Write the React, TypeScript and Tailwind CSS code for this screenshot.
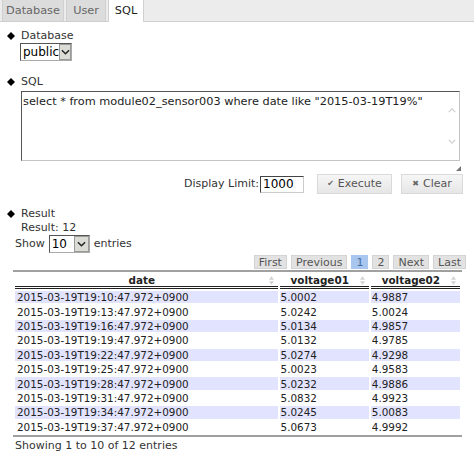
import React from 'react';

const rows = [
  ['2015-03-19T19:10:47.972+0900', '5.0002', '4.9887'],
  ['2015-03-19T19:13:47.972+0900', '5.0242', '5.0024'],
  ['2015-03-19T19:16:47.972+0900', '5.0134', '4.9857'],
  ['2015-03-19T19:19:47.972+0900', '5.0132', '4.9785'],
  ['2015-03-19T19:22:47.972+0900', '5.0274', '4.9298'],
  ['2015-03-19T19:25:47.972+0900', '5.0023', '4.9583'],
  ['2015-03-19T19:28:47.972+0900', '5.0232', '4.9886'],
  ['2015-03-19T19:31:47.972+0900', '5.0832', '4.9923'],
  ['2015-03-19T19:34:47.972+0900', '5.0245', '5.0083'],
  ['2015-03-19T19:37:47.972+0900', '5.0673', '4.9992'],
];

// 작은 V 모양 화살표 (셀렉트 박스용)
function Chevron({ up = false, className = '' }: { up?: boolean; className?: string }) {
  return (
    <svg viewBox="0 0 10 6" className={className} fill="none" stroke="currentColor" strokeWidth="1.6">
      {up ? <path d="M1 5 L5 1 L9 5" /> : <path d="M1 1 L5 5 L9 1" />}
    </svg>
  );
}

function SortIcon() {
  return (
    <svg viewBox="0 0 6 10" className="w-[5px] h-[9px] text-[#d0d0d0]" fill="currentColor">
      <path d="M3 0 L6 4 L0 4 Z" />
      <path d="M3 10 L6 6 L0 6 Z" />
    </svg>
  );
}

function FakeSelect({ value, width }: { value: string; width: string }) {
  return (
    <div
      className={`${width} h-[18px] flex items-stretch border border-t-[#555] border-l-[#555] border-r-[#aaa] border-b-[#aaa] bg-white`}
    >
      <span className="flex-1 pl-[2px] leading-[16px] text-[12px] text-black">{value}</span>
      <span className="w-[15px] flex items-center justify-center bg-[#dcdcd6] border border-[#9a9a9a] text-[#222]">
        <Chevron className="w-[9px] h-[6px]" />
      </span>
    </div>
  );
}

function Label({ text }: { text: string }) {
  return (
    <div className="flex items-center h-[14px] pl-[7px]">
      <span className="w-[14px] flex items-center">
        <svg viewBox="0 0 8 8" className="w-[8px] h-[8px] text-black" fill="currentColor">
          <path d="M4 0 L8 4 L4 8 L0 4 Z" />
        </svg>
      </span>
      <span className="text-[#333] text-[11px] leading-[14px]">{text}</span>
    </div>
  );
}

function PageBtn({ label, active = false }: { label: string; active?: boolean }) {
  return (
    <span
      className={
        active
          ? 'h-[14px] px-[4px] leading-[14px] bg-[#a8c6ee] border border-[#a8c6ee] text-[#4a6fa5]'
          : 'h-[14px] px-[4px] leading-[14px] bg-[#e2e2e2] border border-[#d4d4d4] text-[#555]'
      }
    >
      {label}
    </span>
  );
}

export default function App() {
  return (
    <div
      className="w-[474px] h-[452px] overflow-hidden bg-white text-[10.7px] text-[#333]"
      style={{ fontFamily: '"DejaVu Sans", Verdana, sans-serif' }}
    >
      {/* 탭 바 */}
      <div className="flex h-[22px] bg-[#ececec] border-b border-[#cfcfcf] pl-[2px] gap-[2px] items-end">
        <div className="w-[62px] h-[22px] leading-[22px] text-center bg-[#dcdcdc] border border-b-0 border-[#d0d0d0] text-[#666] text-[11.3px]">
          Database
        </div>
        <div className="w-[40px] h-[22px] leading-[22px] text-center bg-[#dcdcdc] border border-b-0 border-[#d0d0d0] text-[#666] text-[11.3px]">
          User
        </div>
        <div className="w-[36px] h-[23px] leading-[22px] text-center bg-white border border-b-0 border-[#d0d0d0] text-[#222] text-[11.3px] -mb-px">
          SQL
        </div>
      </div>

      {/* Database */}
      <div className="pt-[7px]">
        <Label text="Database" />
        <div className="pl-[20px]">
          <FakeSelect value="public" width="w-[52px]" />
        </div>
      </div>

      {/* SQL */}
      <div className="pt-[14px]">
        <Label text="SQL" />
        <div className="ml-[21px] mt-[2px] w-[439px] h-[70px] flex border border-t-[#555] border-l-[#555] border-r-[#c4c4c4] border-b-[#c4c4c4]">
          <div className="flex-1 pl-[1px] pt-[3px] text-[11.3px] leading-[14px] text-[#222]">
            select * from module02_sensor003 where date like "2015-03-19T19%"
          </div>
          <div className="w-[14px] flex flex-col items-center justify-between py-[16px] text-[#cfcfcf]">
            <Chevron up className="w-[8px] h-[5px]" />
            <Chevron className="w-[8px] h-[5px]" />
          </div>
        </div>
        <div className="h-[13px] flex justify-end pr-[13px] pt-[5px]">
          <svg viewBox="0 0 5 5" className="w-[5px] h-[5px] text-[#777]" fill="currentColor">
            <path d="M5 0 L5 5 L0 5 Z" />
          </svg>
        </div>
        <div className="flex items-center justify-end pr-[11px] h-[20px]">
          <span className="text-[11px] text-[#333]">Display Limit:</span>
          <span className="ml-[1px] w-[44px] h-[17px] leading-[15px] pl-[2px] text-[12px] text-black border border-t-[#444] border-l-[#444] border-r-[#ccc] border-b-[#ccc]">
            1000
          </span>
          <button className="ml-[13px] w-[75px] h-[20px] flex items-center justify-center gap-[4px] bg-gradient-to-b from-[#f6f6f6] to-[#e6e6e6] border border-[#dadada] text-[#555] text-[11px]">
            <span className="text-[8px] text-[#666]">✔</span>
            Execute
          </button>
          <button className="ml-[9px] w-[62px] h-[20px] flex items-center justify-center gap-[4px] bg-gradient-to-b from-[#f6f6f6] to-[#e6e6e6] border border-[#dadada] text-[#555] text-[11px]">
            <span className="text-[8px] text-[#666]">✖</span>
            Clear
          </button>
        </div>
      </div>

      {/* Result */}
      <div className="pt-[13px]">
        <Label text="Result" />
        <div className="pl-[21px] h-[14px] leading-[14px] text-[#333] text-[11px]">Result: 12</div>
        <div className="flex items-center pl-[15px] h-[18px] gap-[4px]">
          <span className="text-[11px]">Show</span>
          <FakeSelect value="10" width="w-[41px]" />
          <span className="text-[11px]">entries</span>
        </div>
        <div className="flex justify-end gap-[4px] pr-[8px] mt-[2px] text-[11px]">
          <PageBtn label="First" />
          <PageBtn label="Previous" />
          <PageBtn label="1" active />
          <PageBtn label="2" />
          <PageBtn label="Next" />
          <PageBtn label="Last" />
        </div>

        <div className="ml-[13px] w-[449px] mt-[1px] border-t-2 border-[#a0a0a0] border-b-2 border-b-[#a0a0a0]">
          <table className="w-full border-separate border-spacing-x-[2px] border-spacing-y-[2px] text-[10.4px] text-[#222]">
            <thead>
              <tr>
                <th className="w-[262px] h-[13px] p-0 border-b-[3px] border-double border-[#222] font-bold">
                  <div className="flex items-center">
                    <span className="flex-1 text-center leading-[12px]">date</span>
                    <span className="pr-[4px]"><SortIcon /></span>
                  </div>
                </th>
                <th className="w-[89px] h-[13px] p-0 border-b-[3px] border-double border-[#222] font-bold">
                  <div className="flex items-center">
                    <span className="flex-1 text-center leading-[12px]">voltage01</span>
                    <span className="pr-[4px]"><SortIcon /></span>
                  </div>
                </th>
                <th className="w-[89px] h-[13px] p-0 border-b-[3px] border-double border-[#222] font-bold">
                  <div className="flex items-center">
                    <span className="flex-1 text-center leading-[12px]">voltage02</span>
                    <span className="pr-[4px]"><SortIcon /></span>
                  </div>
                </th>
              </tr>
            </thead>
            <tbody>
              {rows.map((r, i) => (
                <tr key={r[0]} className={i % 2 === 0 ? 'bg-[#e2e4ff]' : 'bg-white'}>
                  <td className="h-[12.4px] p-0 pl-[2px] leading-[12px]">{r[0]}</td>
                  <td className="h-[12.4px] p-0 pl-[1px] leading-[12px]">{r[1]}</td>
                  <td className="h-[12.4px] p-0 pl-[1px] leading-[12px]">{r[2]}</td>
                </tr>
              ))}
            </tbody>
          </table>
        </div>
        <div className="pl-[15px] pt-[1px] text-[11px] text-[#333]">Showing 1 to 10 of 12 entries</div>
      </div>
    </div>
  );
}
